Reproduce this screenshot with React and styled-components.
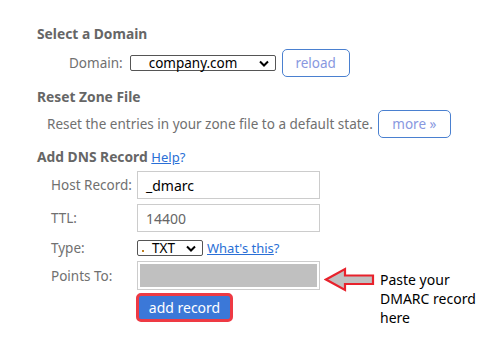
import styled, { createGlobalStyle } from "styled-components";

const GlobalStyle = createGlobalStyle`
  body {
    margin: 0;
    background: #fff;
    font-family: "Noto Sans", "Open Sans", Arial, sans-serif;
  }
`;

const Page = styled.div`
  display: flex;
  flex-direction: column;
  padding: 25px 0 0 37px;
  width: 482px;
  height: 358px;
  box-sizing: border-box;
  color: #666;
  font-size: 13.5px;
`;

const Heading = styled.h3`
  margin: ${(p) => p.$top || 0}px 0 0;
  font-size: 13.8px;
  line-height: 18px;
  font-weight: 700;
  color: #666;
`;

const Row = styled.div`
  display: flex;
  align-items: center;
  height: ${(p) => p.$h}px;
  margin-top: ${(p) => p.$top || 0}px;
  padding-left: ${(p) => p.$indent || 0}px;
`;

const Label = styled.span`
  font-size: 13.5px;
  line-height: 16px;
  color: #707070;
  width: ${(p) => (p.$width ? `${p.$width}px` : "auto")};
  flex-shrink: 0;
`;

const SelectBox = styled.div`
  display: flex;
  align-items: center;
  box-sizing: border-box;
  width: ${(p) => p.$width}px;
  height: 16px;
  border: 1px solid #555;
  border-radius: 2px;
  padding: 0 6px 0 ${(p) => p.$pad}px;
  font-size: 13.5px;
  color: #000;
  margin-left: ${(p) => p.$left || 0}px;
  background: #fff;

  span {
    flex: 1;
    line-height: 14px;
  }
`;

const Dot = styled.i`
  width: 2px;
  height: 2px;
  margin: 6px 8px 0 0;
  background: #c08020;
  flex-shrink: 0;
`;

const OutlineBtn = styled.button`
  box-sizing: border-box;
  height: 28px;
  width: ${(p) => p.$width}px;
  margin-left: ${(p) => p.$left}px;
  border: 1px solid #4a80d0;
  border-radius: 5px;
  background: #fff;
  color: #8898e0;
  font-family: inherit;
  font-size: 13.5px;
  padding: 0;
`;

const Text = styled.span`
  font-size: 13.5px;
  line-height: 16px;
  color: #707070;
`;

const Link = styled.a`
  color: #2a6fd6;
  text-decoration: underline;
  font-weight: 400;
  font-size: 13px;
  line-height: 16px;
  margin-left: ${(p) => p.$left || 0}px;
`;

const Q = styled.span`
  color: #2a6fd6;
  font-weight: 400;
  font-size: 13px;
  line-height: 16px;
`;

const Input = styled.div`
  box-sizing: border-box;
  width: 183px;
  height: 28px;
  border: 1px solid #ccc;
  padding: 0 8px;
  display: flex;
  align-items: center;
  font-size: 14px;
  color: ${(p) => (p.$muted ? "#666" : "#000")};
  background: #fff;
`;

const GrayInput = styled.div`
  box-sizing: border-box;
  width: 183px;
  height: 29px;
  border: 1px solid #ccc;
  padding: 2px;
  background: #fff;

  div {
    height: 100%;
    background: #c0c0c0;
  }
`;

const AddBtn = styled.button`
  box-sizing: border-box;
  width: 97px;
  height: 29px;
  margin-left: 85px;
  border: 3px solid #ee3a44;
  border-radius: 5px;
  background: #3b78d8;
  color: #fff;
  font-family: inherit;
  font-size: 14px;
  padding: 0;
`;

const Annotation = styled.div`
  display: flex;
  align-items: flex-start;
  align-self: flex-start;
  height: 29px;
  margin-top: 6px;
  margin-left: 4px;
`;

const Note = styled.p`
  margin: 3px 0 0 5px;
  font-size: 14px;
  line-height: 19px;
  color: #000;
`;

const Chevron = () => (
  <svg width="10" height="7" viewBox="0 0 10 7">
    <polyline points="1,1.5 5,5.5 9,1.5" fill="none" stroke="#000" strokeWidth="2" />
  </svg>
);

const Arrow = () => (
  <svg width="51" height="25" viewBox="0 0 51 25">
    <polygon
      points="2,12.5 21,2 21,8.5 49,8.5 49,17 21,17 21,23"
      fill="#c0c0c0"
      stroke="#e8222c"
      strokeWidth="2.2"
    />
  </svg>
);

export default function App() {
  return (
    <>
      <GlobalStyle />
      <Page>
        <Heading>Select a Domain</Heading>
        <Row $h={28} $top={6} $indent={32}>
          <Label>Domain:</Label>
          <SelectBox $width={146} $pad={18} $left={7}>
            <span>company.com</span>
            <Chevron />
          </SelectBox>
          <OutlineBtn $width={68} $left={6}>reload</OutlineBtn>
        </Row>

        <Heading $top={11}>Reset Zone File</Heading>
        <Row $h={28} $top={4} $indent={10}>
          <Text>Reset the entries in your zone file to a default state.</Text>
          <OutlineBtn $width={73} $left={5}>more »</OutlineBtn>
        </Row>

        <Heading $top={10}>
          Add DNS Record <Link>Help</Link>
          <Q>?</Q>
        </Heading>

        <Row $h={28} $top={5} $indent={14}>
          <Label $width={86}>Host Record:</Label>
          <Input>_dmarc</Input>
        </Row>
        <Row $h={28} $top={5} $indent={14}>
          <Label $width={86}>TTL:</Label>
          <Input $muted>14400</Input>
        </Row>
        <Row $h={16} $top={8} $indent={14}>
          <Label $width={86}>Type:</Label>
          <SelectBox $width={66} $pad={4}>
            <Dot />
            <span>TXT</span>
            <Chevron />
          </SelectBox>
          <Link $left={4}>What's this</Link>
          <Q>?</Q>
        </Row>
        <Row $h={29} $top={5} $indent={14}>
          <Label $width={86}>Points To:</Label>
          <GrayInput>
            <div />
          </GrayInput>
          <Annotation>
            <Arrow />
            <Note>
              Paste your
              <br />
              DMARC record
              <br />
              here
            </Note>
          </Annotation>
        </Row>
        <Row $h={29} $top={3} $indent={14}>
          <AddBtn>add record</AddBtn>
        </Row>
      </Page>
    </>
  );
}
